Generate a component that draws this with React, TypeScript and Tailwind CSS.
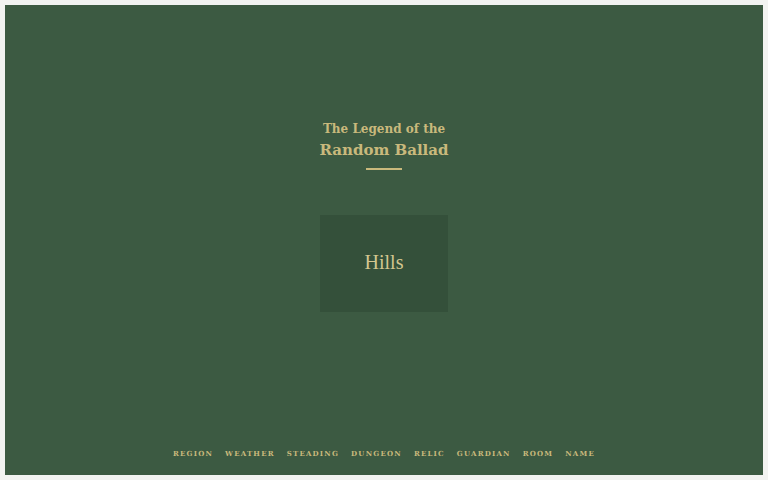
export default function App() {
  const nav = ["Region", "Weather", "Steading", "Dungeon", "Relic", "Guardian", "Room", "Name"];
  return (
    <div className="w-[768px] h-[480px] bg-[#f2f3f1] p-[5px]" style={{ fontFamily: '"Liberation Serif", serif' }}>
      <div className="w-full h-full bg-[#3c5a42] flex flex-col items-center text-[#c9b97c]">
        <div className="mt-[115px] flex flex-col items-center" style={{ fontFamily: '"DejaVu Serif", serif' }}>
          <div className="text-[12px] leading-[18px] font-bold">The Legend of the</div>
          <div className="text-[15px] leading-[24px] font-bold">Random Ballad</div>
          <div className="mt-[6px] w-[36px] h-[2px] bg-[#c9b97c]" />
        </div>
        <div className="mt-[45px] w-[128px] h-[97px] bg-[#34503a] flex items-center justify-center pb-[4px]">
          <span className="text-[20px] text-[#d3c690]">Hills</span>
        </div>
        <div
          className="mt-auto mb-[16px] flex gap-[12px] text-[7px] font-bold tracking-[1.2px] uppercase"
          style={{ fontFamily: '"DejaVu Serif", serif' }}
        >
          {nav.map((n) => (
            <span key={n}>{n}</span>
          ))}
        </div>
      </div>
    </div>
  );
}
